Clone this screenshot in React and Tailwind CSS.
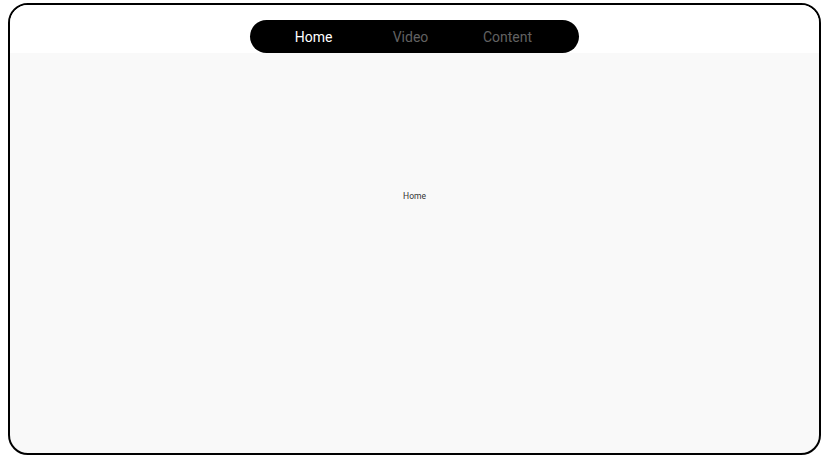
import React, { useState } from "react";

const tabs = ["Home", "Video", "Content"];

export default function App() {
  const [active, setActive] = useState("Home");

  return (
    <div
      className="w-[828px] h-[463px] bg-white pt-[3px] pl-[8px] pr-[7px] pb-[8px]"
      style={{ fontFamily: "Roboto, 'Noto Sans', sans-serif" }}
    >
      {/* Frame */}
      <div className="w-full h-full border-2 border-black rounded-[20px] overflow-hidden flex flex-col bg-[#f9f9f9]">
        {/* Header with pill nav */}
        <div className="h-[48px] shrink-0 bg-white flex justify-center items-end">
          <nav className="w-[329px] h-[33px] bg-black rounded-full flex items-center pl-[15px]">
            {tabs.map((t) => (
              <button
                key={t}
                onClick={() => setActive(t)}
                className={
                  "w-[97px] text-center text-[14px] leading-none " +
                  (active === t ? "text-white" : "text-[#626262]")
                }
              >
                {t}
              </button>
            ))}
          </nav>
        </div>

        {/* Content */}
        <div className="flex-1 flex justify-center pt-[137px]">
          <p className="text-[8.5px] text-[#333]">{active}</p>
        </div>
      </div>
    </div>
  );
}
